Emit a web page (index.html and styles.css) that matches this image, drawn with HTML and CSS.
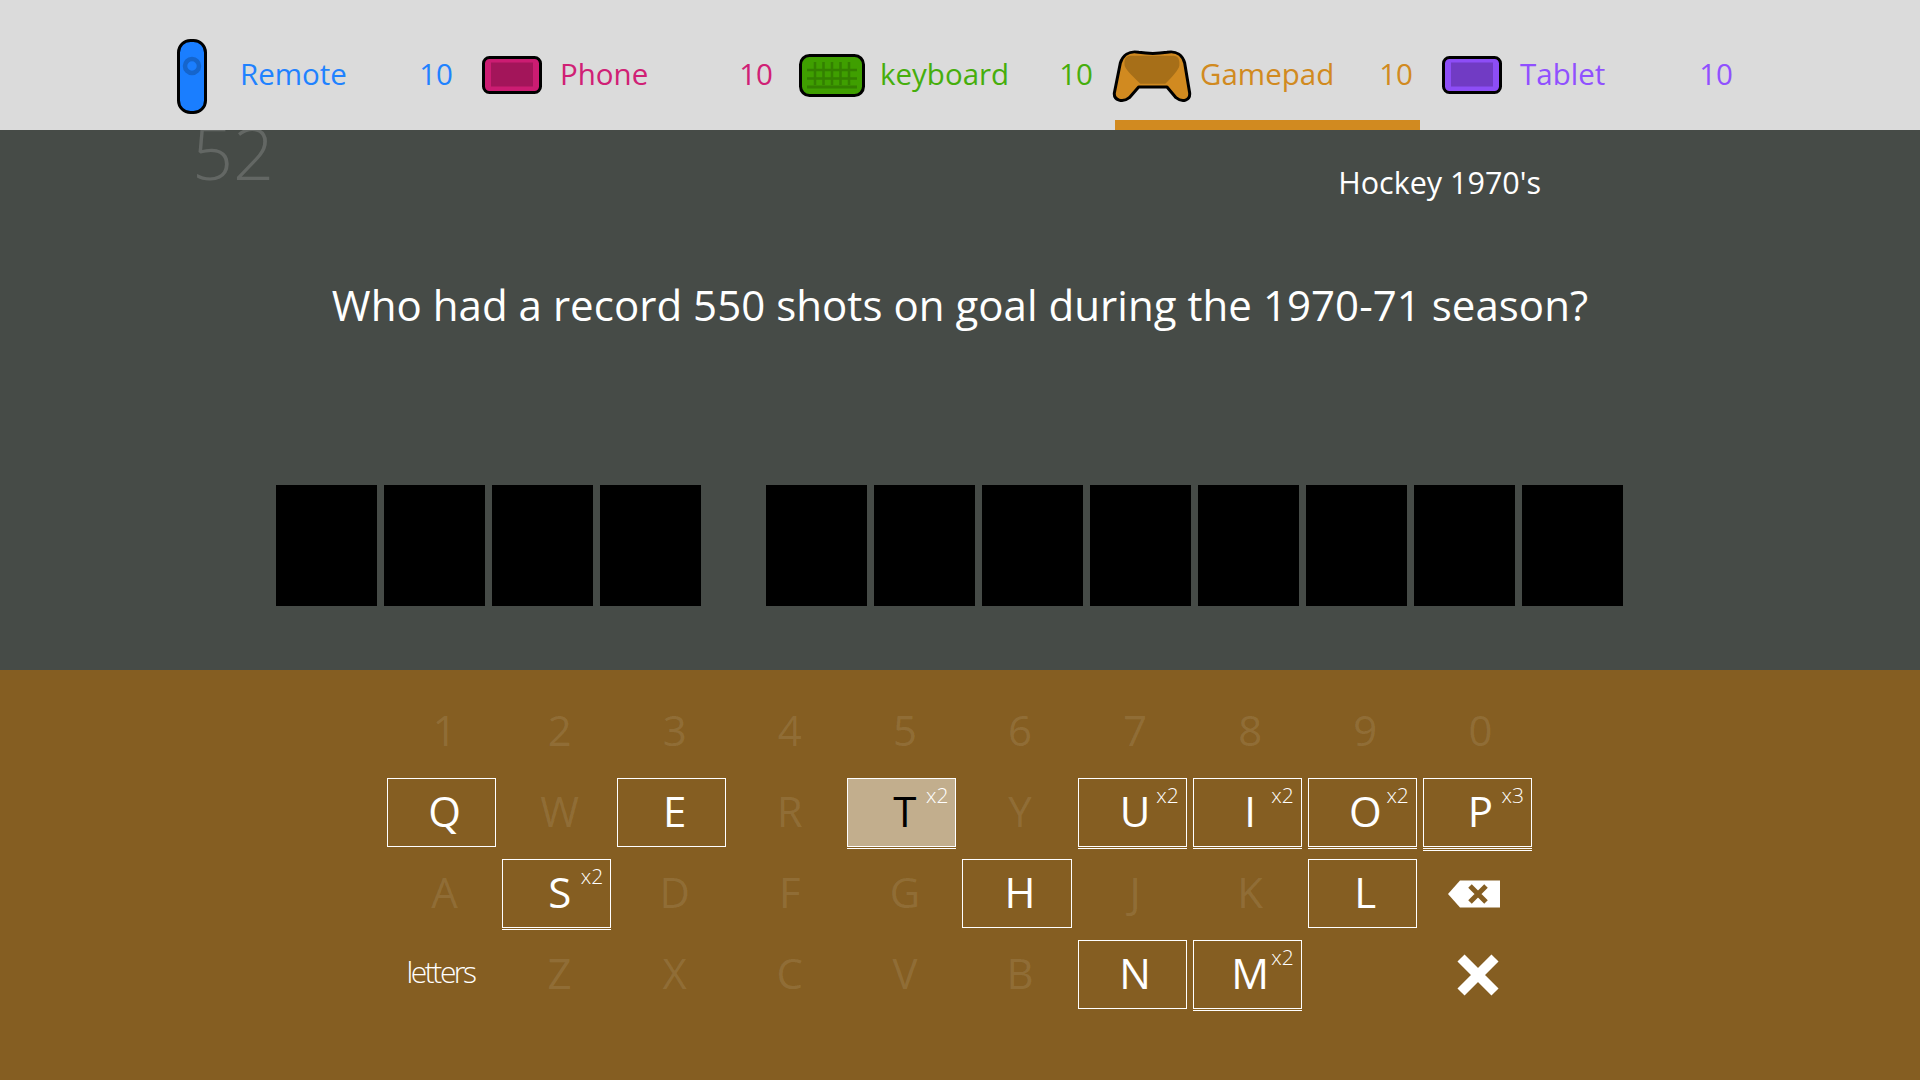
FILE: index.html
```html
<!DOCTYPE html>
<html lang="en">
<head>
    <meta charset="UTF-8">
    <title>Trivia Quiz</title>
    <link rel="stylesheet" href="styles.css">
</head>
<body>
    <header class="players">
        <div class="player remote">
            <div class="player-icon">
                <svg width="30" height="75" viewBox="0 0 30 75">
                    <rect x="1.5" y="1.5" width="27" height="72" rx="12" fill="#1a7eff" stroke="#000" stroke-width="3"/>
                    <circle cx="15" cy="27" r="7" fill="none" stroke="#1565cc" stroke-width="4.5"/>
                </svg>
            </div>
            <span class="player-name">Remote</span>
            <span class="player-score">10</span>
        </div>
        <div class="player phone">
            <div class="player-icon">
                <svg width="60" height="38" viewBox="0 0 60 38">
                    <rect x="1.5" y="1.5" width="57" height="35" rx="6" fill="#cc1c72" stroke="#000" stroke-width="3"/>
                    <rect x="9" y="6.5" width="42" height="24" fill="#a3155a"/>
                </svg>
            </div>
            <span class="player-name">Phone</span>
            <span class="player-score">10</span>
        </div>
        <div class="player keyboard">
            <div class="player-icon">
                <svg width="66" height="43" viewBox="0 0 66 43">
                    <rect x="1.5" y="1.5" width="63" height="40" rx="9" fill="#3f9f00" stroke="#000" stroke-width="3"/>
                    <path d="M16 8v23M24.500 8v23M33 8v23M41.500 8v23M50 8v23M8 16h50M8 24.500h50" fill="none" stroke="#338000" stroke-width="2.500"/>
                    <path d="M8 33h50" fill="none" stroke="#338000" stroke-width="3"/>
                </svg>
            </div>
            <span class="player-name">keyboard</span>
            <span class="player-score">10</span>
        </div>
        <div class="player gamepad active">
            <div class="player-icon">
                <svg width="80" height="54" viewBox="20 28 240 162">
                    <path d="M100 38C125 42 160 42 185 38C215 32 232 48 238 70L253 160C255 182 232 190 212 174L185 142H100L72 174C52 190 25 182 27 160L45 70C52 48 70 32 100 38Z" fill="#d18a20" stroke="#000" stroke-width="9" stroke-linejoin="round"/>
                    <path d="M75 48H205C218 48 224 58 222 78C220 90 200 112 180 132H105C85 112 62 92 58 78C55 58 62 48 75 48Z" fill="#a76f18"/>
                </svg>
            </div>
            <span class="player-name">Gamepad</span>
            <span class="player-score">10</span>
        </div>
        <div class="player tablet">
            <div class="player-icon">
                <svg width="60" height="38" viewBox="0 0 60 38">
                    <rect x="1.5" y="1.5" width="57" height="35" rx="6" fill="#8d4df6" stroke="#000" stroke-width="3"/>
                    <rect x="9" y="6.5" width="42" height="24" fill="#713bc4"/>
                </svg>
            </div>
            <span class="player-name">Tablet</span>
            <span class="player-score">10</span>
        </div>
    </header>

    <section class="question">
        <div class="timer">52</div>
        <div class="category">Hockey 1970's</div>
        <div class="question-text">Who had a record 550 shots on goal during the 1970-71 season?</div>
        <div class="answer">
            <div class="word">
                <div class="tile"></div><div class="tile"></div><div class="tile"></div><div class="tile"></div>
            </div>
            <div class="word">
                <div class="tile"></div><div class="tile"></div><div class="tile"></div><div class="tile"></div>
                <div class="tile"></div><div class="tile"></div><div class="tile"></div><div class="tile"></div>
            </div>
        </div>
    </section>

    <section class="keys">
        <div class="key off">1</div>
        <div class="key off">2</div>
        <div class="key off">3</div>
        <div class="key off">4</div>
        <div class="key off">5</div>
        <div class="key off">6</div>
        <div class="key off">7</div>
        <div class="key off">8</div>
        <div class="key off">9</div>
        <div class="key off">0</div>

        <div class="key on">Q</div>
        <div class="key off">W</div>
        <div class="key on">E</div>
        <div class="key off">R</div>
        <div class="key on x2 focus">T<span class="count">x2</span></div>
        <div class="key off">Y</div>
        <div class="key on x2">U<span class="count">x2</span></div>
        <div class="key on x2">I<span class="count">x2</span></div>
        <div class="key on x2">O<span class="count">x2</span></div>
        <div class="key on x3">P<span class="count">x3</span></div>

        <div class="key off">A</div>
        <div class="key on x2">S<span class="count">x2</span></div>
        <div class="key off">D</div>
        <div class="key off">F</div>
        <div class="key off">G</div>
        <div class="key on">H</div>
        <div class="key off">J</div>
        <div class="key off">K</div>
        <div class="key on">L</div>
        <div class="key icon-key backspace">
            <svg width="52" height="28" viewBox="0 0 52 28">
                <path d="M0 14L12 0.500H52V27.500H12Z" fill="#fff"/>
                <path d="M22 6L38 22M38 6L22 22" fill="none" stroke="#855e22" stroke-width="5"/>
            </svg>
        </div>

        <div class="key letters">letters</div>
        <div class="key off">Z</div>
        <div class="key off">X</div>
        <div class="key off">C</div>
        <div class="key off">V</div>
        <div class="key off">B</div>
        <div class="key on">N</div>
        <div class="key on x2">M<span class="count">x2</span></div>
        <div class="key blank"></div>
        <div class="key icon-key close">
            <svg width="42" height="42" viewBox="0 0 42 42">
                <path d="M4 4L38 38M38 4L4 38" fill="none" stroke="#fff" stroke-width="10"/>
            </svg>
        </div>
    </section>
</body>
</html>
```

FILE: styles.css
```css
body {
    margin: 0;
    height: 1080px;
    overflow: hidden;
    display: flex;
    flex-direction: column;
    font-family: "Open Sans", "Noto Sans", sans-serif;
    background-color: #855e22;
}

/* Player bar */
.players {
    height: 130px;
    flex-shrink: 0;
    display: flex;
    gap: 15px;
    padding-left: 155px;
    background-color: #dbdbdb;
    position: relative;
    z-index: 1;
}

.player {
    width: 305px;
    box-sizing: border-box;
    display: flex;
    align-items: center;
    padding: 30px 7px 0 0;
    border-bottom: 10px solid transparent;
    font-size: 29.500px;
}

.player.active {
    border-bottom-color: #d18a20;
}

.player-icon {
    width: 74px;
    margin-right: 11px;
    display: flex;
    justify-content: center;
}

.player-icon svg {
    flex-shrink: 0;
}

.remote .player-icon,
.gamepad .player-icon {
    padding-top: 2px;
}

.player-name,
.player-score {
    margin-bottom: 4px;
}

.player-score {
    margin-left: auto;
}

.remote { color: #1f82ff; }
.phone { color: #d02075; }
.keyboard { color: #46ae0c; }
.gamepad { color: #d18a20; }
.tablet { color: #9050ff; }

/* Question */
.question {
    height: 540px;
    flex-shrink: 0;
    position: relative;
    overflow: hidden;
    background-color: #464b47;
    color: #fff;
}

.timer {
    position: absolute;
    left: 192px;
    top: -27px;
    font-size: 72px;
    font-weight: 300;
    color: rgba(255, 255, 255, 0.16);
}

.category {
    padding: 31px 379px 0 0;
    text-align: right;
    font-size: 30.500px;
}

.question-text {
    margin-top: 73px;
    text-align: center;
    font-size: 42px;
    letter-spacing: 0.040px;
}

.answer {
    display: flex;
    gap: 65px;
    margin-top: 152px;
    padding-left: 276px;
}

.word {
    display: flex;
    gap: 7px;
}

.tile {
    width: 101px;
    height: 121px;
    background-color: #000;
}

/* Keyboard */
.keys {
    display: grid;
    grid-template-columns: repeat(10, 109.100px);
    grid-auto-rows: 69px;
    column-gap: 6px;
    row-gap: 12px;
    padding: 27px 0 0 387px;
}

.key {
    position: relative;
    box-sizing: border-box;
    display: flex;
    align-items: center;
    justify-content: center;
    padding: 0 0 4px 6px;
    font-size: 42px;
}

.key.off {
    color: rgba(255, 255, 255, 0.1);
}

.key.on {
    color: #fff;
    border: 1px solid #fff;
}

.key.x2 {
    box-shadow: 0 1px 0 #855e22, 0 2px 0 #fff;
}

.key.x3 {
    box-shadow: 0 1px 0 #855e22, 0 2px 0 #fff, 0 3px 0 #855e22, 0 4px 0 #fff;
}

.key.focus {
    color: #000;
    background-color: #c2ae8d;
}

.count {
    position: absolute;
    top: 2px;
    right: 7px;
    font-size: 21px;
    font-weight: 300;
    color: #fff;
}

.letters {
    padding: 0 2px 6px 0;
    color: #fff;
    font-size: 30px;
    font-weight: 300;
    letter-spacing: -2.500px;
}

.icon-key {
    padding: 0;
}

.backspace svg {
    margin-right: 7px;
}

.close svg {
    margin-left: 2px;
}
```
